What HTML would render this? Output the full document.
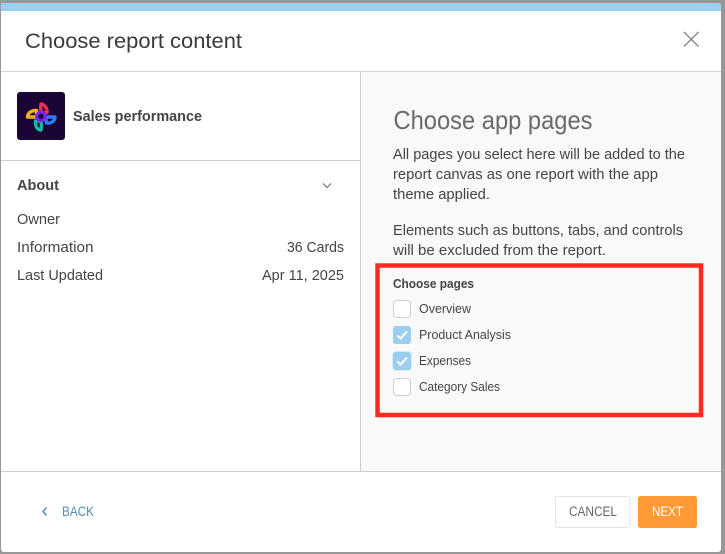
<!DOCTYPE html>
<html><head><meta charset="utf-8"><style>
html,body{margin:0;padding:0;width:725px;height:554px;overflow:hidden;background:#979797}
svg{display:block}
text{font-family:"Liberation Sans",sans-serif;fill:#333}
.b{font-weight:700}
.s{font-size:14.500px;fill:#444}
.c{font-size:12.500px;fill:#444}
</style></head><body>
<svg width="725" height="554" viewBox="0 0 725 554" xmlns="http://www.w3.org/2000/svg">
<rect width="725" height="554" fill="#979797"/>
<path d="M1 3H718a3 3 0 0 1 3 3V549a3 3 0 0 1-3 3H4a3 3 0 0 1-3-3Z" fill="#fff"/>
<path d="M1 3H718a3 3 0 0 1 3 3V11H1Z" fill="#9bcfef"/>
<rect x="361" y="72" width="360" height="399" fill="#f9f9f9"/>
<rect x="1" y="71" width="720" height="1" fill="#d4d4d4"/>
<rect x="1" y="160" width="360" height="1" fill="#cfcfcf"/>
<rect x="360" y="72" width="1" height="399" fill="#cfcfcf"/>
<rect x="1" y="471" width="720" height="1" fill="#cfcfcf"/>

<text x="25" y="48" font-size="21" textLength="217" lengthAdjust="spacingAndGlyphs" style="fill:#3a3a3a">Choose report content</text>
<path d="M684 32L698.500 46.500M698.500 32L684 46.500" stroke="#858585" stroke-width="1.300" fill="none"/>

<rect x="17" y="92" width="48" height="48" rx="3" fill="#1a0536"/>
<g stroke-width="3.400" stroke-linejoin="round" fill="none">
<path d="M41 104C45 104.500 47.500 108.500 47 112.500L41.500 113C40.500 110 40.500 107 41 104Z" stroke="#e8304f"/>
<path d="M27.500 117C27.500 113 32 110 36.500 110.500L36.500 117Z" stroke="#eeb022"/>
<path d="M55 117C55 121 50.500 124 46.500 123L45.500 117Z" stroke="#2f7af0"/>
<path d="M41 130C37 130 35 125.500 35.500 121L41 121C41.500 124 41.500 127 41 130Z" stroke="#17b8a3"/>
</g>
<circle cx="41" cy="116.500" r="4.300" fill="#1a0536" stroke="#7b22f5" stroke-width="3.200"/>

<text class="b s" x="73" y="121" textLength="129" lengthAdjust="spacingAndGlyphs">Sales performance</text>
<text class="b s" x="17" y="190" textLength="42" lengthAdjust="spacingAndGlyphs">About</text>
<path d="M323 183.500L327 187.500L331 183.500" stroke="#777" stroke-width="1.200" fill="none"/>
<text class="s" x="17" y="224" textLength="43" lengthAdjust="spacingAndGlyphs">Owner</text>
<text class="s" x="17" y="252" textLength="76.500" lengthAdjust="spacingAndGlyphs">Information</text>
<text class="s" x="287" y="252" textLength="57" lengthAdjust="spacingAndGlyphs">36 Cards</text>
<text class="s" x="17" y="280" textLength="86" lengthAdjust="spacingAndGlyphs">Last Updated</text>
<text class="s" x="262" y="280" textLength="82" lengthAdjust="spacingAndGlyphs">Apr 11, 2025</text>

<text x="393.500" y="129" font-size="26" textLength="199" lengthAdjust="spacingAndGlyphs" style="fill:#6a6a6a">Choose app pages</text>
<text class="s" x="393" y="159" textLength="292" lengthAdjust="spacingAndGlyphs">All pages you select here will be added to the</text>
<text class="s" x="393" y="179" textLength="265" lengthAdjust="spacingAndGlyphs">report canvas as one report with the app</text>
<text class="s" x="393" y="199" textLength="97" lengthAdjust="spacingAndGlyphs">theme applied.</text>
<text class="s" x="393" y="235" textLength="290" lengthAdjust="spacingAndGlyphs">Elements such as buttons, tabs, and controls</text>
<text class="s" x="393" y="255" textLength="213" lengthAdjust="spacingAndGlyphs">will be excluded from the report.</text>

<rect x="377.500" y="265.500" width="323.500" height="149.500" fill="none" stroke="#ff2a1f" stroke-width="4.500"/>

<text class="b c" x="393" y="288" textLength="81" lengthAdjust="spacingAndGlyphs">Choose pages</text>
<rect x="393.500" y="300.500" width="17" height="17" rx="3" fill="#fff" stroke="#cfcfcf"/>
<text class="c" x="419" y="313" textLength="52" lengthAdjust="spacingAndGlyphs">Overview</text>
<rect x="393" y="326" width="18" height="18" rx="3" fill="#9bcfef"/>
<path d="M397.500 335.500L400.500 338.500L407 331.500" stroke="#fff" stroke-width="2" fill="none"/>
<text class="c" x="419" y="339" textLength="92" lengthAdjust="spacingAndGlyphs">Product Analysis</text>
<rect x="392" y="351" width="20" height="20" rx="4" fill="#dcedf9"/>
<rect x="393" y="352" width="18" height="18" rx="3" fill="#9bcfef"/>
<path d="M397.500 361.500L400.500 364.500L407 357.500" stroke="#fff" stroke-width="2" fill="none"/>
<text class="c" x="419" y="365" textLength="52" lengthAdjust="spacingAndGlyphs">Expenses</text>
<rect x="393.500" y="378.500" width="17" height="17" rx="3" fill="#fff" stroke="#cfcfcf"/>
<text class="c" x="419" y="391" textLength="81" lengthAdjust="spacingAndGlyphs">Category Sales</text>

<path d="M46.500 507.500L43 511.500L46.500 515.500" stroke="#4f8db8" stroke-width="1.500" fill="none"/>
<text x="62" y="516" font-size="13.500" textLength="32" lengthAdjust="spacingAndGlyphs" style="fill:#4f8db8">BACK</text>
<rect x="555.500" y="496.500" width="74.500" height="31" rx="2.500" fill="#fff" stroke="#e3e3e3"/>
<text x="569" y="516" font-size="13.500" textLength="48" lengthAdjust="spacingAndGlyphs" style="fill:#666">CANCEL</text>
<rect x="638" y="496" width="59" height="32" rx="2.500" fill="#ff9b37"/>
<text x="652" y="516" font-size="13.500" textLength="31" lengthAdjust="spacingAndGlyphs" style="fill:#fff">NEXT</text>
</svg>
</body></html>
